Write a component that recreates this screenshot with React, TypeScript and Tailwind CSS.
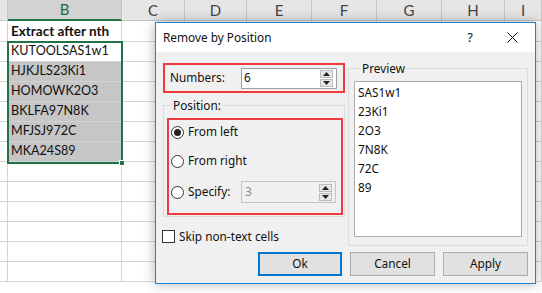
import React from 'react';

const columns = [
  { label: '', w: 'w-[8px]' },
  { label: 'B', w: 'w-[114px]' },
  { label: 'C', w: 'w-[63px]' },
  { label: 'D', w: 'w-[62px]' },
  { label: 'E', w: 'w-[65px]' },
  { label: 'F', w: 'w-[65px]' },
  { label: 'G', w: 'w-[65px]' },
  { label: 'H', w: 'w-[63px]' },
  { label: 'I', w: 'flex-1' },
];

const cellValues = ['KUTOOLSAS1w1', 'HJKJLS23Ki1', 'HOMOWK2O3', 'BKLFA97N8K', 'MFJSJ972C', 'MKA24S89'];
const previewItems = ['SAS1w1', '23Ki1', '2O3', '7N8K', '72C', '89'];

function Spinner() {
  return (
    <div className="flex flex-col gap-[1px] mr-[3px]">
      <div className="w-[13px] h-[8px] bg-[#e6e6e6] border border-[#bcbcbc] flex items-center justify-center">
        <svg width="7" height="4" viewBox="0 0 7 4"><path d="M0 4 L3.5 0 L7 4 Z" fill="#222" /></svg>
      </div>
      <div className="w-[13px] h-[8px] bg-[#e6e6e6] border border-[#bcbcbc] flex items-center justify-center">
        <svg width="7" height="4" viewBox="0 0 7 4"><path d="M0 0 L3.5 4 L7 0 Z" fill="#222" /></svg>
      </div>
    </div>
  );
}

function Radio({ checked }: { checked?: boolean }) {
  return (
    <div className="w-[13px] h-[13px] rounded-full border border-[#333] bg-white flex items-center justify-center">
      {checked && <div className="w-[7px] h-[7px] rounded-full bg-[#222]" />}
    </div>
  );
}

function Sheet() {
  const rows: { text: string; bold?: boolean; selected?: boolean }[] = [
    { text: 'Extract after nth', bold: true },
    ...cellValues.map((t, i) => ({ text: t, selected: i > 0 })),
    { text: '' }, { text: '' }, { text: '' }, { text: '' }, { text: '' }, { text: '' },
  ];
  return (
    <div className="flex flex-col" style={{ fontFamily: 'Lato, "Liberation Sans", sans-serif' }}>
      {/* column headers */}
      <div className="flex h-[21px] bg-[#e6e6e6]">
        {columns.map((c, i) => (
          <div
            key={i}
            className={`${c.w} shrink-0 flex items-center justify-center border-r border-[#c6c6c6] text-[15px] ${
              c.label === 'B' ? 'bg-[#d2d2d2] text-[#1e6b3f] border-b-2 border-b-[#217346]' : 'text-[#444] border-b border-b-[#c6c6c6]'
            }`}
          >
            {c.label}
          </div>
        ))}
      </div>
      {rows.map((r, ri) => (
        <div key={ri} className={`flex ${ri === 0 ? 'h-[21px]' : 'h-[20px]'}`}>
          {columns.map((c, ci) => (
            <div
              key={ci}
              className={`${c.w} shrink-0 border-r border-b border-[#d4d4d4] flex items-center overflow-visible whitespace-nowrap text-[#111] ${
                ci === 1 && r.selected ? 'bg-[#c6c6c6]' : 'bg-white'
              } ${ci === 1 ? 'pl-[3px]' : ''} ${r.bold ? 'font-bold text-[13.5px]' : 'text-[12.6px]'}`}
            >
              {ci === 1 ? r.text : ''}
            </div>
          ))}
        </div>
      ))}
    </div>
  );
}

function Dialog() {
  return (
    <div
      className="absolute left-[155px] top-[22px] w-[381px] h-[262px] border border-[#1883d7] bg-[#f0f0f0] shadow-[0_0_12px_rgba(0,0,0,0.3)] text-[11.8px] text-[#111] flex flex-col"
      style={{ fontFamily: '"Noto Sans", "Open Sans", sans-serif' }}
    >
      {/* title bar */}
      <div className="h-[29px] bg-white flex items-center pl-[7px]">
        <span className="flex-1">Remove by Position</span>
        <span className="w-[20px] text-center text-[13px] mr-[27px]">?</span>
        <svg width="11" height="11" viewBox="0 0 11 11" className="mr-[17px]">
          <path d="M0.5 0.5 L10.5 10.5 M10.5 0.5 L0.5 10.5" stroke="#111" strokeWidth="1" />
        </svg>
      </div>

      <div className="flex pl-[7px] pt-[11px] gap-[3px]">
        {/* left column */}
        <div className="w-[182px] flex flex-col">
          <div className="h-[30px] border-2 border-[#ef3b3b] flex items-center pl-[5px]">
            <span className="w-[71px]">Numbers:</span>
            <div className="w-[96px] h-[21px] border border-[#a0a0a0] bg-white flex items-center justify-between pl-[2px]">
              <span>6</span>
              <Spinner />
            </div>
          </div>

          <fieldset className="mt-[4px] border border-[#dcdcdc] pl-[3px] pr-[1px] pb-[1px]">
            <legend className="ml-[5px] px-[1px] leading-[16px]">Position:</legend>
            <div className="mt-[5px] h-[97px] border-2 border-[#ef3b3b] flex flex-col pl-[2px]">
              <div className="h-[24px] flex items-center gap-[4px]">
                <Radio checked />
                <span>From left</span>
              </div>
              <div className="h-[34px] flex items-center gap-[4px]">
                <Radio />
                <span>From right</span>
              </div>
              <div className="h-[28px] flex items-center gap-[4px]">
                <Radio />
                <span className="w-[49px]">Specify:</span>
                <div className="w-[95px] h-[22px] border border-[#c4c4c4] bg-[#f0f0f0] flex items-center justify-between pl-[3px] text-[#8a8a8a]">
                  <span>3</span>
                  <Spinner />
                </div>
              </div>
            </div>
          </fieldset>

          <div className="mt-[11px] flex items-center gap-[4px] -ml-[1px]">
            <div className="w-[13px] h-[13px] border border-[#333] bg-white" />
            <span>Skip non-text cells</span>
          </div>
        </div>

        {/* right column */}
        <fieldset className="w-[180px] -mt-[3px] border border-[#dcdcdc] px-[5px] pb-[3px]">
          <legend className="ml-[7px] px-[1px] leading-[16px]">Preview</legend>
          <div className="mt-[5px] h-[156px] border border-[#ababab] bg-white pl-[3px] pt-[1px] leading-[19px]">
            {previewItems.map((p) => (
              <div key={p}>{p}</div>
            ))}
          </div>
        </fieldset>
      </div>

      <div className="mt-auto mb-[7px] flex justify-end gap-[8px] pr-[7px]">
        <button className="w-[84px] h-[24px] border-2 border-[#0078d7] bg-[#e1e1e1]">Ok</button>
        <button className="w-[85px] h-[24px] border border-[#adadad] bg-[#e1e1e1]">Cancel</button>
        <button className="w-[85px] h-[24px] border border-[#adadad] bg-[#e1e1e1]">Apply</button>
      </div>
    </div>
  );
}

export default function App() {
  return (
    <div className="relative w-[542px] h-[293px] overflow-hidden bg-white">
      <Sheet />
      {/* selection outline */}
      <div className="absolute left-[7px] top-[41px] w-[116px] h-[123px] border-2 border-[#217346]" />
      <div className="absolute left-[119px] top-[160px] w-[6px] h-[6px] bg-[#217346] border border-white" />
      <Dialog />
    </div>
  );
}
